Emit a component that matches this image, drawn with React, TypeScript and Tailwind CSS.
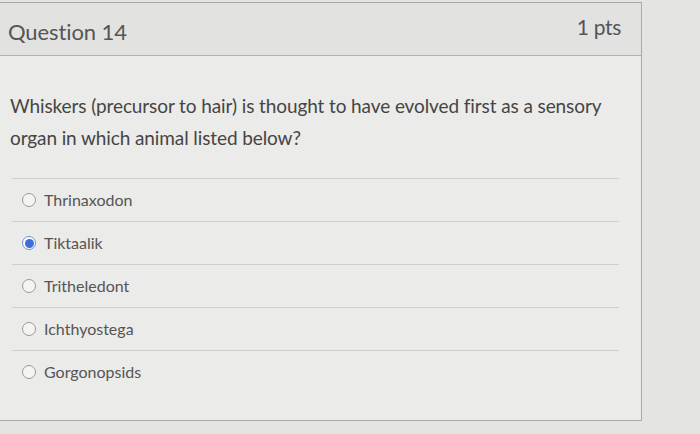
const options = [
  { label: "Thrinaxodon", checked: false },
  { label: "Tiktaalik", checked: true },
  { label: "Tritheledont", checked: false },
  { label: "Ichthyostega", checked: false },
  { label: "Gorgonopsids", checked: false },
];

function Radio({ checked }: { checked: boolean }) {
  if (checked) {
    return (
      <span className="flex h-[14px] w-[14px] items-center justify-center rounded-full border border-[#6d8fd6] bg-white">
        <span className="h-[9px] w-[9px] rounded-full bg-[#3f6fd4]" />
      </span>
    );
  }
  return <span className="h-[14px] w-[14px] rounded-full border border-[#9a9a9a] bg-[#f4f4f2]" />;
}

export default function App() {
  return (
    <div className="h-[434px] w-[700px] overflow-hidden bg-[#e4e4e1] pt-[2px] font-['Lato','Noto_Sans',sans-serif]">
      <div className="w-[642px] border-y border-r border-[#a9a9a7] bg-[#ebebe9]">
        {/* Header */}
        <div className="flex h-[53px] items-center justify-between border-b border-[#b2b2b0] bg-[#e2e3e1] pl-[8px] pr-[20px]">
          <span className="mt-[4px] text-[22px] tracking-[-0.1px] text-[#555]">Question 14</span>
          <span className="mb-[4px] text-[21px] tracking-[-0.3px] text-[#555]">1 pts</span>
        </div>

        {/* Body */}
        <div className="pb-[27px] pt-[34px]">
          <p className="pl-[10px] text-[19px] leading-[32px] tracking-[-0.1px] text-[#454545]">
            Whiskers (precursor to hair) is thought to have evolved first as a sensory
            <br />
            organ in which animal listed below?
          </p>

          <div className="ml-[12px] mr-[22px] mt-[24px]">
            {options.map((o) => (
              <div
                key={o.label}
                className="flex h-[43px] items-center gap-[8px] border-t border-[#cfcfcd] pl-[10px]"
              >
                <Radio checked={o.checked} />
                <span className="text-[16px] text-[#555]">{o.label}</span>
              </div>
            ))}
          </div>
        </div>
      </div>
    </div>
  );
}
